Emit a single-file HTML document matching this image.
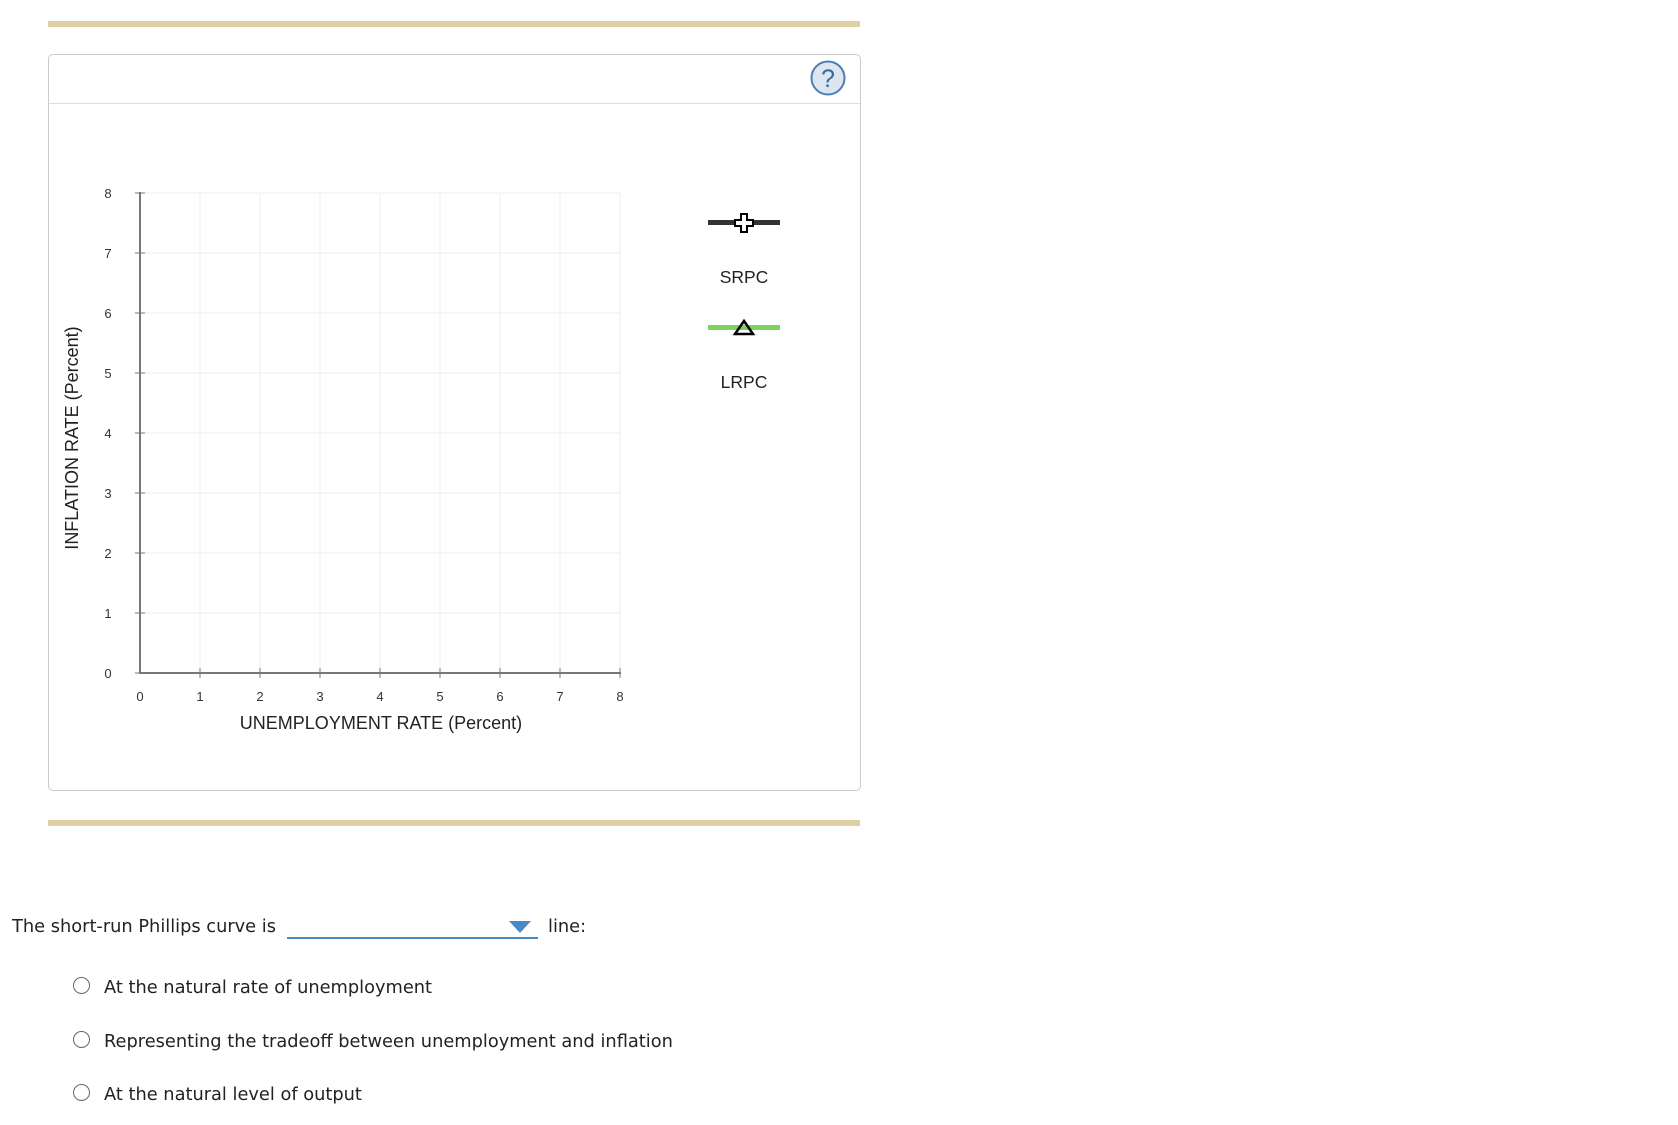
<!DOCTYPE html>
<html><head><meta charset="utf-8"><style>
body{margin:0;width:1678px;height:1125px;background:#fff;position:relative;overflow:hidden;font-family:"DejaVu Sans",Verdana,sans-serif;}
.bar{position:absolute;left:48px;width:812px;height:6px;background:#dcd0a4;}
.panel{position:absolute;left:48px;top:54px;width:811px;height:735px;border:1px solid #ccc;border-radius:5px;}
.hdr{position:absolute;left:0;right:0;top:48px;border-top:1px solid #ddd;}
.t{position:absolute;font-size:17.8px;color:#222;white-space:nowrap;}
.r{position:absolute;left:73px;width:15px;height:15px;border:1.5px solid #666;border-radius:50%;}
</style></head><body>
<div class="bar" style="top:21px"></div>
<div class="panel"><div class="hdr"></div></div>
<svg style="position:absolute;left:0;top:0" width="1678" height="830" font-family="Liberation Sans, Arial, sans-serif">
<circle cx="828" cy="78" r="16.5" fill="#dde6ef" stroke="#4d7eb4" stroke-width="2"/>
<text x="828" y="87" font-size="25" fill="#2e6aa8" text-anchor="middle">?</text>
<g stroke="#eee" stroke-width="1">
<line x1="200" y1="193" x2="200" y2="673"/><line x1="260" y1="193" x2="260" y2="673"/><line x1="320" y1="193" x2="320" y2="673"/><line x1="380" y1="193" x2="380" y2="673"/><line x1="440" y1="193" x2="440" y2="673"/><line x1="500" y1="193" x2="500" y2="673"/><line x1="560" y1="193" x2="560" y2="673"/><line x1="620" y1="193" x2="620" y2="673"/>
<line x1="140" y1="193" x2="620" y2="193"/><line x1="140" y1="253" x2="620" y2="253"/><line x1="140" y1="313" x2="620" y2="313"/><line x1="140" y1="373" x2="620" y2="373"/><line x1="140" y1="433" x2="620" y2="433"/><line x1="140" y1="493" x2="620" y2="493"/><line x1="140" y1="553" x2="620" y2="553"/><line x1="140" y1="613" x2="620" y2="613"/>
</g>
<g stroke="#777" stroke-width="2">
<line x1="140" y1="192" x2="140" y2="674"/><line x1="139" y1="673" x2="621" y2="673"/>
</g>
<g stroke="#777" stroke-width="1">
<line x1="135" y1="193" x2="145" y2="193"/><line x1="135" y1="253" x2="145" y2="253"/><line x1="135" y1="313" x2="145" y2="313"/><line x1="135" y1="373" x2="145" y2="373"/><line x1="135" y1="433" x2="145" y2="433"/><line x1="135" y1="493" x2="145" y2="493"/><line x1="135" y1="553" x2="145" y2="553"/><line x1="135" y1="613" x2="145" y2="613"/><line x1="135" y1="673" x2="145" y2="673"/>
<line x1="200" y1="668" x2="200" y2="678"/><line x1="260" y1="668" x2="260" y2="678"/><line x1="320" y1="668" x2="320" y2="678"/><line x1="380" y1="668" x2="380" y2="678"/><line x1="440" y1="668" x2="440" y2="678"/><line x1="500" y1="668" x2="500" y2="678"/><line x1="560" y1="668" x2="560" y2="678"/><line x1="620" y1="668" x2="620" y2="678"/>
</g>
<g font-size="13" fill="#333" text-anchor="middle">
<text x="108" y="198">8</text><text x="108" y="258">7</text><text x="108" y="318">6</text><text x="108" y="378">5</text><text x="108" y="438">4</text><text x="108" y="498">3</text><text x="108" y="558">2</text><text x="108" y="618">1</text><text x="108" y="678">0</text>
<text x="140" y="701">0</text><text x="200" y="701">1</text><text x="260" y="701">2</text><text x="320" y="701">3</text><text x="380" y="701">4</text><text x="440" y="701">5</text><text x="500" y="701">6</text><text x="560" y="701">7</text><text x="620" y="701">8</text>
</g>
<text x="381" y="729" font-size="18" fill="#222" text-anchor="middle">UNEMPLOYMENT RATE (Percent)</text>
<text transform="translate(78,438) rotate(-90)" font-size="18" fill="#222" text-anchor="middle">INFLATION RATE (Percent)</text>
<rect x="708" y="220" width="72" height="5" fill="#333"/>
<path d="M741 214h6v6h6v6h-6v6h-6v-6h-6v-6h6z" fill="#fff" stroke="#000" stroke-width="2"/>
<text x="744" y="283" font-size="17.5" fill="#222" text-anchor="middle">SRPC</text>
<rect x="708" y="325" width="72" height="5" fill="#7ed35c"/>
<path d="M744 321l-9 13h18z" fill="none" stroke="#000" stroke-width="2.5"/>
<text x="744" y="388" font-size="17.5" fill="#222" text-anchor="middle">LRPC</text>
</svg>
<div class="bar" style="top:820px"></div>
<div class="t" style="left:12px;top:916px">The short-run Phillips curve is</div>
<div style="position:absolute;left:287px;top:937px;width:251px;height:2px;background:#4a89c8"></div>
<svg style="position:absolute;left:509px;top:921px" width="24" height="14"><path d="M0 0h22l-11 12z" fill="#4a89c8"/></svg>
<div class="t" style="left:548px;top:916px">line:</div>
<div class="r" style="top:977px"></div><div class="t" style="left:104px;top:977px">At the natural rate of unemployment</div>
<div class="r" style="top:1031px"></div><div class="t" style="left:104px;top:1031px">Representing the tradeoff between unemployment and inflation</div>
<div class="r" style="top:1084px"></div><div class="t" style="left:104px;top:1084px">At the natural level of output</div>
</body></html>
